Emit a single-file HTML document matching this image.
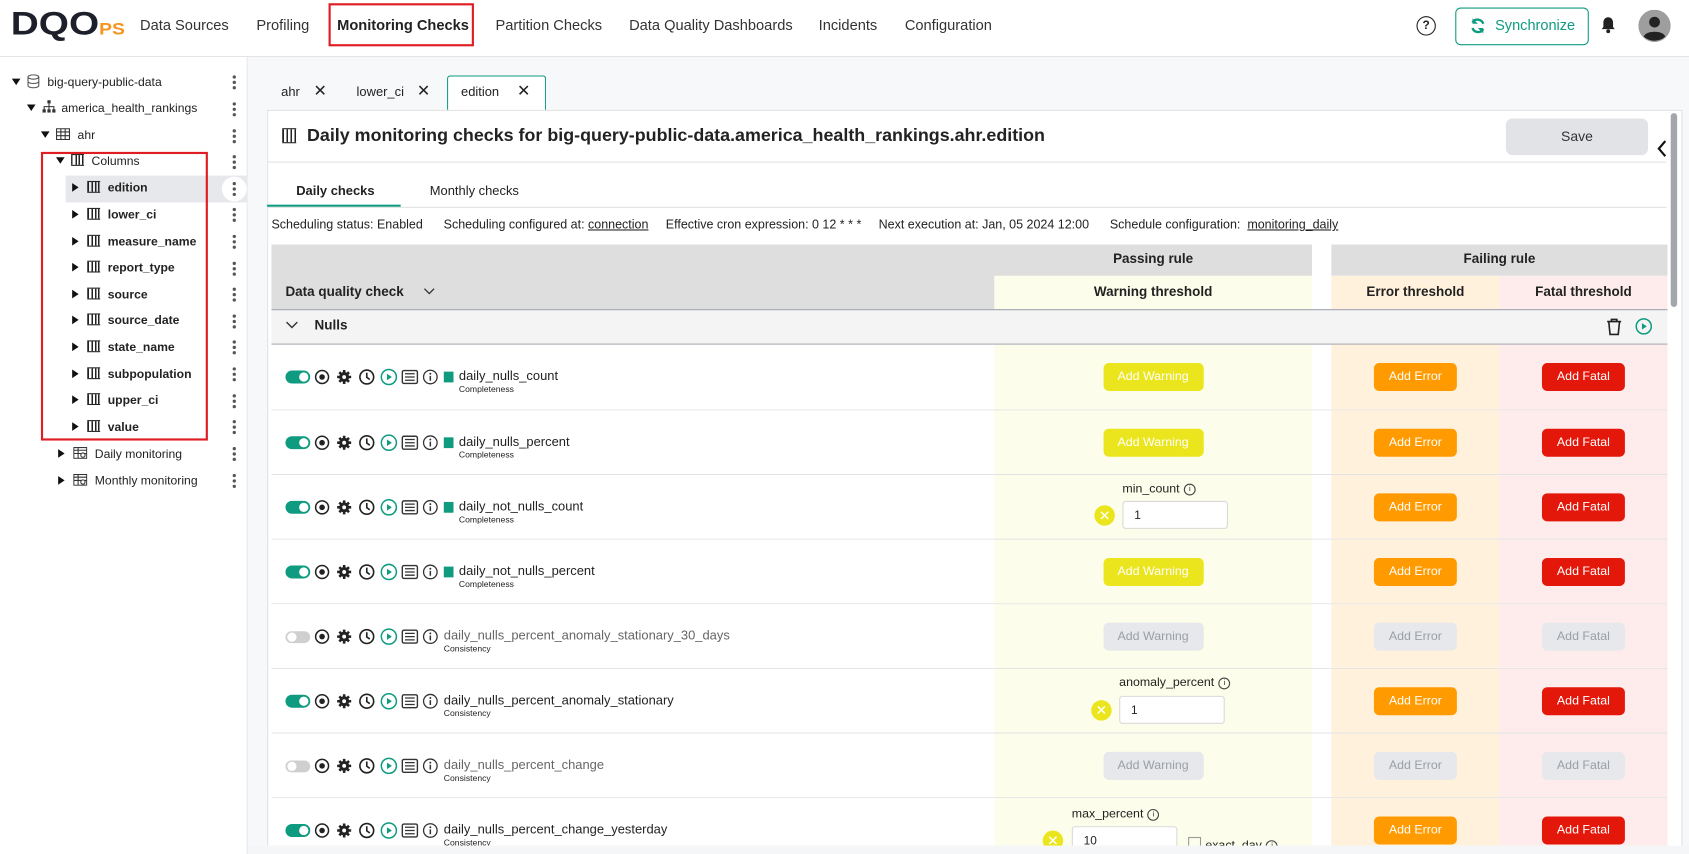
<!DOCTYPE html>
<html><head><meta charset="utf-8">
<style>
html,body{margin:0;padding:0;width:1689px;height:854px;overflow:hidden;background:#fff;font-family:"Liberation Sans",Arial,sans-serif;color:#222}
#w{position:absolute;left:0;top:0;width:1568px;height:793px;transform:scale(1.07717);transform-origin:0 0;overflow:hidden}
.a{position:absolute}
.top{left:0;top:0;width:1568px;height:52px;border-bottom:1px solid #e4e4e4;background:#fff}
.nav{top:16px;font-size:13.6px;color:#333}
.side{left:0;top:53px;width:229px;height:740px;border-right:1px solid #e6e6e6;background:#fff}
.tr{position:absolute;font-size:11.3px;color:#222;height:22px;line-height:22px;white-space:nowrap}
.tri{display:inline-block;width:0;height:0;border-left:4px solid transparent;border-right:4px solid transparent;border-top:6px solid #111;margin-right:6px;vertical-align:1px}
.trr{display:inline-block;width:0;height:0;border-top:4px solid transparent;border-bottom:4px solid transparent;border-left:6px solid #111;margin-right:8px;vertical-align:0px}
.dots{position:absolute;left:216px;width:3px;font-size:0}
.dots i{display:block;width:2.6px;height:2.6px;border-radius:50%;background:#555;margin-bottom:2.4px}
.col{display:inline-block;width:12px;height:11px;vertical-align:-1px;margin-right:7px;background:linear-gradient(90deg,#222 0 1.5px,transparent 1.5px 4px,#222 4px 5.5px,transparent 5.5px 7px,#222 7px 8.5px,transparent 8.5px 10px,#222 10px 11.5px,transparent 0);border-top:1.2px solid #222;border-bottom:1.2px solid #222;box-sizing:border-box}
.main{left:230px;top:53px;width:1338px;height:740px;background:#f7f8fa}
.panel{left:248px;top:102px;width:1312px;height:700px;background:#fff;border:1px solid #e1e1e1}
.row{position:absolute;left:252px;width:1296px;display:grid;grid-template-columns:671px 295px 18px 156px 156px;border-bottom:1px solid #e3e3e3}
.row>div{position:relative}
.c1{background:#fff}.cw{background:#fdfdeb}.cg{background:#fff}.ce{background:#fff1dc}.cf{background:#fdeceb}
.btn{position:absolute;top:50%;left:50%;transform:translate(-50%,-50%);height:26px;line-height:26px;border-radius:5px;font-size:11.5px;color:#fff;text-align:center;white-space:nowrap}
.bw{width:93px;background:#ebe51e}.be{width:77px;background:#ff9a00}.bf{width:77px;background:#e3170a}
.dis{background:#e6e8eb!important;color:#9aa0a6!important}
.ic{position:absolute;left:13px;top:50%;transform:translateY(-50%);height:16px;display:flex;align-items:center;gap:0}
.nm{position:absolute;left:174px;top:50%;transform:translateY(-58%);font-size:12px;color:#222;white-space:nowrap}
.nm small{position:absolute;left:0;top:15px;font-size:8px;color:#222}
.gr .nm{color:#666}
.lbl{position:absolute;font-size:11.5px;color:#222;white-space:nowrap}
.inp{position:absolute;width:98px;height:26px;border:1px solid #d9d9d9;border-radius:3px;background:#fff;font-size:11px;line-height:26px;padding-left:10px;box-sizing:border-box}
.xc{position:absolute;width:19px;height:19px;border-radius:50%;background:#ebe51e;color:#fff;font-size:13px;line-height:19px;text-align:center}
.infi{display:inline-block;width:9px;height:9px;border:1px solid #444;border-radius:50%;font-size:7px;line-height:9px;text-align:center;vertical-align:1px;margin-left:4px}
</style></head><body><div id="w">

<div class="a top"></div>
<div class="a" style="left:10px;top:6px;font-size:30px;font-weight:900;letter-spacing:0px;color:#1d1f2b;font-family:'Liberation Sans',sans-serif;transform:scaleX(1.2);transform-origin:0 0">DQO<span style="font-size:15px;color:#f7941d;font-weight:900">PS</span></div>
<div class="a nav" style="left:130px">Data Sources</div>
<div class="a nav" style="left:238px">Profiling</div>
<div class="a" style="left:305px;top:3px;width:135px;height:40px;border:2px solid #e11d24;box-sizing:border-box"></div>
<div class="a nav" style="left:313px;font-weight:bold;color:#222">Monitoring Checks</div>
<div class="a nav" style="left:460px">Partition Checks</div>
<div class="a nav" style="left:584px">Data Quality Dashboards</div>
<div class="a nav" style="left:760px">Incidents</div>
<div class="a nav" style="left:840px">Configuration</div>
<div class="a" style="left:1315px;top:15px;width:16px;height:16px;border:1.6px solid #222;border-radius:50%;font-size:11px;font-weight:bold;line-height:16px;text-align:center">?</div>
<div class="a" style="left:1351px;top:7px;width:124px;height:35px;border:1.5px solid #0e9b80;border-radius:5px;box-sizing:border-box"></div>
<svg class="a" style="left:1364px;top:16px" width="16" height="16" viewBox="0 0 16 16"><path d="M13 6A5.5 5.5 0 0 0 3 5" fill="none" stroke="#0e9b80" stroke-width="2.2"/><path d="M3 1v5h5z" fill="#0e9b80"/><path d="M3 10a5.5 5.5 0 0 0 10 1" fill="none" stroke="#0e9b80" stroke-width="2.2"/><path d="M13 15v-5h-5z" fill="#0e9b80"/></svg>
<div class="a" style="left:1388px;top:16px;font-size:13.5px;color:#0e9b80">Synchronize</div>
<svg class="a" style="left:1486px;top:15px" width="14" height="16" viewBox="0 0 14 16"><path d="M7 1c-3 0-4.5 2.5-4.5 5v4L1 12h12l-1.5-2V6C11.5 3.5 10 1 7 1z" fill="#222"/><circle cx="7" cy="14" r="1.8" fill="#222"/></svg>
<svg class="a" style="left:1521px;top:9px" width="30" height="30" viewBox="0 0 30 30"><circle cx="15" cy="15" r="15" fill="#9e9e9e"/><circle cx="15" cy="11.5" r="5" fill="#222"/><path d="M5 25c2-6 18-6 20 0a15 15 0 0 1-20 0z" fill="#222"/></svg>

<div class="a side"></div>
<div class="tr" style="left:11px;top:66px"><span class="tri"></span><svg width="12" height="13" style="vertical-align:-2px;margin-right:7px" viewBox="0 0 12 13"><ellipse cx="6" cy="2.5" rx="5" ry="2" fill="none" stroke="#555"/><path d="M1 2.5v8c0 1.1 2.2 2 5 2s5-.9 5-2v-8M1 6.5c0 1.1 2.2 2 5 2s5-.9 5-2" fill="none" stroke="#555"/></svg>big-query-public-data</div>
<div class="tr" style="left:25px;top:90px"><span class="tri"></span><svg width="13" height="12" style="vertical-align:-1px;margin-right:5px" viewBox="0 0 13 12"><rect x="5" y="0" width="3" height="3" fill="#333"/><path d="M6.5 3v3M2 9V6h9v3M6.5 6v3" stroke="#333" fill="none"/><rect x="0.5" y="8.5" width="3" height="3" fill="#333"/><rect x="5" y="8.5" width="3" height="3" fill="#333"/><rect x="9.5" y="8.5" width="3" height="3" fill="#333"/></svg>america_health_rankings</div>
<div class="tr" style="left:38px;top:115px"><span class="tri"></span><svg width="13" height="11" style="vertical-align:-1px;margin-right:7px" viewBox="0 0 13 11"><rect x=".5" y=".5" width="12" height="10" fill="none" stroke="#333"/><path d="M.5 3.5h12M.5 7h12M4.5 .5v10M8.5 .5v10" stroke="#333"/></svg>ahr</div>
<div class="tr" style="left:52px;top:139px"><span class="tri"></span><span class="col"></span>Columns</div>
<div class="a" style="left:61px;top:163px;width:168px;height:25px;background:#e6e8ec"></div>
<div class="a" style="left:206px;top:164px;width:23px;height:23px;border-radius:50%;background:#fff"></div>
<div class="tr" style="left:67px;top:164px;font-weight:bold"><span class="trr"></span><span class="col"></span>edition</div>
<div class="tr" style="left:67px;top:189px;font-weight:bold"><span class="trr"></span><span class="col"></span>lower_ci</div>
<div class="tr" style="left:67px;top:214px;font-weight:bold"><span class="trr"></span><span class="col"></span>measure_name</div>
<div class="tr" style="left:67px;top:238px;font-weight:bold"><span class="trr"></span><span class="col"></span>report_type</div>
<div class="tr" style="left:67px;top:263px;font-weight:bold"><span class="trr"></span><span class="col"></span>source</div>
<div class="tr" style="left:67px;top:287px;font-weight:bold"><span class="trr"></span><span class="col"></span>source_date</div>
<div class="tr" style="left:67px;top:312px;font-weight:bold"><span class="trr"></span><span class="col"></span>state_name</div>
<div class="tr" style="left:67px;top:337px;font-weight:bold"><span class="trr"></span><span class="col"></span>subpopulation</div>
<div class="tr" style="left:67px;top:361px;font-weight:bold"><span class="trr"></span><span class="col"></span>upper_ci</div>
<div class="tr" style="left:67px;top:386px;font-weight:bold"><span class="trr"></span><span class="col"></span>value</div>
<div class="a" style="left:38px;top:141px;width:155px;height:268px;border:2px solid #e11d24;box-sizing:border-box"></div>
<div class="tr" style="left:54px;top:411px"><span class="trr"></span><svg width="13" height="11" style="vertical-align:-1px;margin-right:7px" viewBox="0 0 13 11"><rect x=".5" y=".5" width="12" height="10" fill="none" stroke="#333"/><path d="M.5 3h12M.5 6h12M4.5 .5v10" stroke="#333"/><circle cx="9" cy="7.5" r="2" fill="#fff" stroke="#333"/></svg>Daily monitoring</div>
<div class="tr" style="left:54px;top:436px"><span class="trr"></span><svg width="13" height="11" style="vertical-align:-1px;margin-right:7px" viewBox="0 0 13 11"><rect x=".5" y=".5" width="12" height="10" fill="none" stroke="#333"/><path d="M.5 3h12M.5 6h12M4.5 .5v10" stroke="#333"/><circle cx="9" cy="7.5" r="2" fill="#fff" stroke="#333"/></svg>Monthly monitoring</div>
<div class="dots" style="top:70px"><i></i><i></i><i></i></div>
<div class="dots" style="top:95px"><i></i><i></i><i></i></div>
<div class="dots" style="top:120px"><i></i><i></i><i></i></div>
<div class="dots" style="top:144px"><i></i><i></i><i></i></div>
<div class="dots" style="top:169px"><i></i><i></i><i></i></div>
<div class="dots" style="top:193px"><i></i><i></i><i></i></div>
<div class="dots" style="top:218px"><i></i><i></i><i></i></div>
<div class="dots" style="top:243px"><i></i><i></i><i></i></div>
<div class="dots" style="top:267px"><i></i><i></i><i></i></div>
<div class="dots" style="top:292px"><i></i><i></i><i></i></div>
<div class="dots" style="top:316px"><i></i><i></i><i></i></div>
<div class="dots" style="top:341px"><i></i><i></i><i></i></div>
<div class="dots" style="top:366px"><i></i><i></i><i></i></div>
<div class="dots" style="top:390px"><i></i><i></i><i></i></div>
<div class="dots" style="top:415px"><i></i><i></i><i></i></div>
<div class="dots" style="top:440px"><i></i><i></i><i></i></div>

<div class="a main"></div>
<div class="a" style="left:261px;top:78px;font-size:12px">ahr</div>
<div class="a" style="left:291px;top:75px;font-size:15px">✕</div>
<div class="a" style="left:331px;top:78px;font-size:12px">lower_ci</div>
<div class="a" style="left:387px;top:75px;font-size:15px">✕</div>
<div class="a" style="left:415px;top:70px;width:92px;height:34px;border:1px solid #0e9b80;border-bottom:none;border-radius:3px 3px 0 0;background:#fff;box-sizing:border-box"></div>
<div class="a" style="left:428px;top:78px;font-size:12px">edition</div>
<div class="a" style="left:480px;top:75px;font-size:15px">✕</div>

<div class="a panel"></div>
<div class="a" style="left:249px;top:103px;width:1311px;height:200px;background:#fff"></div>
<div class="a" style="left:262px;top:119px;width:13px;height:14px;background:linear-gradient(90deg,#222 0 1.5px,transparent 1.5px 4px,#222 4px 5.5px,transparent 5.5px 7.5px,#222 7.5px 9px,transparent 9px 11.5px,#222 11.5px 13px,transparent 0);border-top:1.3px solid #222;border-bottom:1.3px solid #222;box-sizing:border-box"></div>
<div class="a" style="left:285px;top:116px;font-size:16.6px;font-weight:bold;color:#222">Daily monitoring checks for big-query-public-data.america_health_rankings.ahr.edition</div>
<div class="a" style="left:1398px;top:110px;width:132px;height:34px;background:#e1e3e7;border-radius:6px;text-align:center;line-height:34px;font-size:13px;color:#333">Save</div>
<svg class="a" style="left:1538px;top:130px" width="10" height="16" viewBox="0 0 10 16"><path d="M8 1L2 8l6 7" fill="none" stroke="#111" stroke-width="2"/></svg>
<div class="a" style="left:249px;top:150px;width:1298px;height:1px;background:#e1e1e1"></div>
<div class="a" style="left:275px;top:170px;font-size:12px;font-weight:bold">Daily checks</div>
<div class="a" style="left:399px;top:170px;font-size:12px">Monthly checks</div>
<div class="a" style="left:248px;top:190px;width:124px;height:2px;background:#0e9b80"></div>
<div class="a" style="left:249px;top:192px;width:1298px;height:1px;background:#e1e1e1"></div>
<div class="a" style="left:252px;top:202px;font-size:11.6px;white-space:nowrap;word-spacing:0">Scheduling status: Enabled &nbsp;&nbsp;&nbsp;&nbsp; Scheduling configured at: <u>connection</u> &nbsp;&nbsp;&nbsp; Effective cron expression: 0 12 * * * &nbsp;&nbsp;&nbsp; Next execution at: Jan, 05 2024 12:00 &nbsp;&nbsp;&nbsp;&nbsp; Schedule configuration: &nbsp;<u>monitoring_daily</u></div>

<!-- header -->
<div class="a" style="left:252px;top:227px;width:966px;height:60px;background:#dedede"></div>
<div class="a" style="left:1236px;top:227px;width:312px;height:29px;background:#dedede"></div>
<div class="a" style="left:923px;top:256px;width:295px;height:31px;background:#fdfdeb"></div>
<div class="a" style="left:1236px;top:256px;width:156px;height:31px;background:#fff1dc"></div>
<div class="a" style="left:1392px;top:256px;width:156px;height:31px;background:#fdeceb"></div>
<div class="a" style="left:923px;top:233px;width:295px;text-align:center;font-size:12.5px;font-weight:bold">Passing rule</div>
<div class="a" style="left:1236px;top:233px;width:312px;text-align:center;font-size:12.5px;font-weight:bold">Failing rule</div>
<div class="a" style="left:923px;top:264px;width:295px;text-align:center;font-size:12.5px;font-weight:bold">Warning threshold</div>
<div class="a" style="left:1236px;top:264px;width:156px;text-align:center;font-size:12.5px;font-weight:bold">Error threshold</div>
<div class="a" style="left:1392px;top:264px;width:156px;text-align:center;font-size:12.5px;font-weight:bold">Fatal threshold</div>
<div class="a" style="left:265px;top:264px;font-size:12.5px;font-weight:bold">Data quality check</div>
<svg class="a" style="left:393px;top:267px" width="11" height="7" viewBox="0 0 11 7"><path d="M1 1l4.5 4.5L10 1" fill="none" stroke="#333" stroke-width="1.2"/></svg>
<div class="a" style="left:252px;top:287px;width:1296px;height:33px;background:#f4f4f4;border-top:1px solid #9ea3ad;border-bottom:1px solid #9ea3ad;box-sizing:border-box"></div>
<svg class="a" style="left:265px;top:298px" width="12" height="8" viewBox="0 0 12 8"><path d="M1 1l5 5 5-5" fill="none" stroke="#333" stroke-width="1.3"/></svg>
<div class="a" style="left:292px;top:295px;font-size:12.5px;font-weight:bold">Nulls</div>
<svg class="a" style="left:1491px;top:295px" width="15" height="17" viewBox="0 0 15 17"><path d="M1 3.5h13M5 3.5V1.5h5v2M2.5 3.5l1.2 12h7.6l1.2-12" fill="none" stroke="#222" stroke-width="1.5"/></svg>
<svg class="a" style="left:1518px;top:295px" width="16" height="16" viewBox="0 0 16 16"><circle cx="8" cy="8" r="7" fill="none" stroke="#0e9b80" stroke-width="1.4"/><path d="M6.3 5v6l4.5-3z" fill="#0e9b80"/></svg>

<svg width="0" height="0" style="position:absolute"><defs>
<g id="ico">
<rect x="0" y="2" width="23" height="12" rx="6" fill="#0e9b80"/><circle cx="17" cy="8" r="4.3" fill="#fff"/>
<circle cx="34" cy="8" r="6" fill="none" stroke="#222" stroke-width="1.4"/><circle cx="34" cy="8" r="2.6" fill="#222"/>
<circle cx="54.5" cy="8" r="4.6" fill="#222"/><g stroke="#222" stroke-width="2.4"><path d="M54.5 1.5v13M48 8h13M50 3.5l9 9M59 3.5l-9 9"/></g><circle cx="54.5" cy="8" r="1.8" fill="#fff"/>
<circle cx="75.5" cy="8" r="6.4" fill="none" stroke="#222" stroke-width="1.5"/><path d="M75.5 4v4.3l2.8 2" fill="none" stroke="#222" stroke-width="1.5"/>
<circle cx="96" cy="8" r="7" fill="none" stroke="#0e9b80" stroke-width="1.4"/><path d="M94.3 5v6l4.5-3z" fill="#0e9b80"/>
<rect x="108.5" y="2" width="14" height="12" rx="1.5" fill="none" stroke="#333" stroke-width="1.3"/><path d="M111 5h9M111 8h9M111 11h9" stroke="#333" stroke-width="1.2"/>
<circle cx="134.5" cy="8" r="6.3" fill="none" stroke="#333" stroke-width="1.2"/><path d="M134.5 7v4.5" stroke="#333" stroke-width="1.4"/><circle cx="134.5" cy="5" r=".9" fill="#333"/>
</g>
<g id="icog">
<rect x="0" y="3" width="23" height="11" rx="5.5" fill="#cfcfcf"/><circle cx="6" cy="8.5" r="4.3" fill="#fff"/>
<circle cx="34" cy="8" r="6" fill="none" stroke="#222" stroke-width="1.4"/><circle cx="34" cy="8" r="2.6" fill="#222"/>
<circle cx="54.5" cy="8" r="4.6" fill="#222"/><g stroke="#222" stroke-width="2.4"><path d="M54.5 1.5v13M48 8h13M50 3.5l9 9M59 3.5l-9 9"/></g><circle cx="54.5" cy="8" r="1.8" fill="#fff"/>
<circle cx="75.5" cy="8" r="6.4" fill="none" stroke="#222" stroke-width="1.5"/><path d="M75.5 4v4.3l2.8 2" fill="none" stroke="#222" stroke-width="1.5"/>
<circle cx="96" cy="8" r="7" fill="none" stroke="#0e9b80" stroke-width="1.4"/><path d="M94.3 5v6l4.5-3z" fill="#0e9b80"/>
<rect x="108.5" y="2" width="14" height="12" rx="1.5" fill="none" stroke="#333" stroke-width="1.3"/><path d="M111 5h9M111 8h9M111 11h9" stroke="#333" stroke-width="1.2"/>
<circle cx="134.5" cy="8" r="6.3" fill="none" stroke="#333" stroke-width="1.2"/><path d="M134.5 7v4.5" stroke="#333" stroke-width="1.4"/><circle cx="134.5" cy="5" r=".9" fill="#333"/>
</g></defs></svg>

<div class="row" style="top:320px;height:60px"><div class="c1"><svg class="ic" width="162" height="16"><use href="#ico"/><rect x="147" y="3" width="9" height="10" fill="#0e9b80"/></svg><div class="nm">daily_nulls_count<small>Completeness</small></div></div><div class="cw"><div class="btn bw">Add Warning</div></div><div class="cg"></div><div class="ce"><div class="btn be">Add Error</div></div><div class="cf"><div class="btn bf">Add Fatal</div></div></div>

<div class="row" style="top:381px;height:59px"><div class="c1"><svg class="ic" width="162" height="16"><use href="#ico"/><rect x="147" y="3" width="9" height="10" fill="#0e9b80"/></svg><div class="nm">daily_nulls_percent<small>Completeness</small></div></div><div class="cw"><div class="btn bw">Add Warning</div></div><div class="cg"></div><div class="ce"><div class="btn be">Add Error</div></div><div class="cf"><div class="btn bf">Add Fatal</div></div></div>

<div class="row" style="top:441px;height:59px"><div class="c1"><svg class="ic" width="162" height="16"><use href="#ico"/><rect x="147" y="3" width="9" height="10" fill="#0e9b80"/></svg><div class="nm">daily_not_nulls_count<small>Completeness</small></div></div><div class="cw"><div class="lbl" style="left:119px;top:7px">min_count<span class="infi">i</span></div><div class="xc" style="left:93px;top:28px">✕</div><div class="inp" style="left:119px;top:24px">1</div></div><div class="cg"></div><div class="ce"><div class="btn be">Add Error</div></div><div class="cf"><div class="btn bf">Add Fatal</div></div></div>

<div class="row" style="top:501px;height:59px"><div class="c1"><svg class="ic" width="162" height="16"><use href="#ico"/><rect x="147" y="3" width="9" height="10" fill="#0e9b80"/></svg><div class="nm">daily_not_nulls_percent<small>Completeness</small></div></div><div class="cw"><div class="btn bw">Add Warning</div></div><div class="cg"></div><div class="ce"><div class="btn be">Add Error</div></div><div class="cf"><div class="btn bf">Add Fatal</div></div></div>

<div class="row gr" style="top:561px;height:59px"><div class="c1"><svg class="ic" width="162" height="16"><use href="#icog"/></svg><div class="nm" style="left:160px">daily_nulls_percent_anomaly_stationary_30_days<small>Consistency</small></div></div><div class="cw"><div class="btn bw dis">Add Warning</div></div><div class="cg"></div><div class="ce"><div class="btn be dis">Add Error</div></div><div class="cf"><div class="btn bf dis">Add Fatal</div></div></div>

<div class="row" style="top:621px;height:59px"><div class="c1"><svg class="ic" width="162" height="16"><use href="#ico"/></svg><div class="nm" style="left:160px">daily_nulls_percent_anomaly_stationary<small>Consistency</small></div></div><div class="cw"><div class="lbl" style="left:116px;top:7px">anomaly_percent<span class="infi">i</span></div><div class="xc" style="left:90px;top:29px">✕</div><div class="inp" style="left:116px;top:25px">1</div></div><div class="cg"></div><div class="ce"><div class="btn be">Add Error</div></div><div class="cf"><div class="btn bf">Add Fatal</div></div></div>

<div class="row gr" style="top:681px;height:59px"><div class="c1"><svg class="ic" width="162" height="16"><use href="#icog"/></svg><div class="nm" style="left:160px">daily_nulls_percent_change<small>Consistency</small></div></div><div class="cw"><div class="btn bw dis">Add Warning</div></div><div class="cg"></div><div class="ce"><div class="btn be dis">Add Error</div></div><div class="cf"><div class="btn bf dis">Add Fatal</div></div></div>

<div class="row" style="top:741px;height:70px;border:none"><div class="c1"><svg class="ic" style="top:30px" width="162" height="16"><use href="#ico"/></svg><div class="nm" style="left:160px;top:30px">daily_nulls_percent_change_yesterday<small>Consistency</small></div></div><div class="cw"><div class="lbl" style="left:72px;top:9px">max_percent<span class="infi">i</span></div><div class="xc" style="left:45px;top:30px">✕</div><div class="inp" style="left:72px;top:26px">10</div><div class="lbl" style="left:180px;top:36px"><span style="display:inline-block;width:10px;height:10px;border:1px solid #999;margin-right:4px;vertical-align:-1px"></span>exact_day<span class="infi">i</span></div></div><div class="cg"></div><div class="ce"><div class="btn be" style="top:30px">Add Error</div></div><div class="cf"><div class="btn bf" style="top:30px">Add Fatal</div></div></div>

<div class="a" style="left:230px;top:785px;width:1338px;height:8px;background:#f5f6f8"></div>
<div class="a" style="left:1549px;top:103px;width:10px;height:682px;background:#fff"></div>
<div class="a" style="left:1551px;top:105px;width:6px;height:180px;background:#a3a7ad;border-radius:3px"></div>
</div></body></html>
